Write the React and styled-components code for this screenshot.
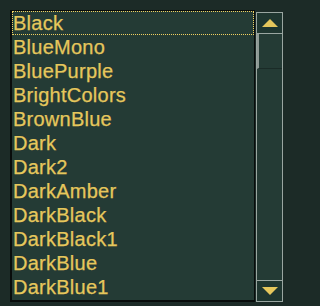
import React, { useState } from "react";
import styled, { createGlobalStyle } from "styled-components";

const GlobalStyle = createGlobalStyle`
  html, body {
    margin: 0;
    padding: 0;
    background: #1c2b27;
  }
`;

const Window = styled.div`
  width: 316px;
  height: 306px;
  box-sizing: border-box;
  padding: 10px 0 0 10px;
  background: #1c2b27;
  display: flex;
  align-items: flex-start;
  font-family: "Liberation Sans", Arial, sans-serif;
`;

const ListBox = styled.ul`
  list-style: none;
  margin: 0;
  padding: 0;
  width: 245px;
  height: 292px;
  box-sizing: border-box;
  border: 1px solid #080c0b;
  border-left-width: 2px;
  border-bottom-width: 2px;
  background: #243b35;
  overflow: hidden;
`;

const Item = styled.li`
  height: 24px;
  line-height: 22px;
  padding-left: 0;
  font-size: 20px;
  letter-spacing: 0.25px;
  -webkit-text-stroke: 0.25px #e6c75c;
  color: #e6c75c;
  white-space: nowrap;
  box-sizing: border-box;
  border: 1px dotted ${(p) => (p.$active ? "#f0d060" : "transparent")};
  cursor: pointer;
`;

const ScrollBar = styled.div`
  width: 27px;
  height: 290px;
  margin-top: 2px;
  margin-left: 1px;
  box-sizing: border-box;
  border: 1px solid #9aa6a1;
  background: #243b35;
  display: flex;
  flex-direction: column;
`;

const ArrowButton = styled.div`
  height: 20px;
  flex: none;
  display: flex;
  align-items: center;
  justify-content: center;
  background: #1f3630;
  border: 1px solid #9aa6a1;
  margin: -1px;
`;

const Track = styled.div`
  flex: 1;
  margin-top: 1px;
`;

const Thumb = styled.div`
  height: 35px;
  box-sizing: border-box;
  border-left: 2px solid #8e9a95;
  border-bottom: 1px solid #1a2b27;
  background: #243b35;
`;

const Arrow = ({ up }) => (
  <svg width="18" height="10" viewBox="0 0 18 10">
    <polygon
      points={up ? "9,1 17,9 1,9" : "1,1 17,1 9,9"}
      fill="#e6c75c"
    />
  </svg>
);

const themes = [
  "Black",
  "BlueMono",
  "BluePurple",
  "BrightColors",
  "BrownBlue",
  "Dark",
  "Dark2",
  "DarkAmber",
  "DarkBlack",
  "DarkBlack1",
  "DarkBlue",
  "DarkBlue1",
];

export default function App() {
  const [selected, setSelected] = useState(0);
  return (
    <>
      <GlobalStyle />
      <Window>
        <ListBox>
          {themes.map((t, i) => (
            <Item key={t} $active={i === selected} onClick={() => setSelected(i)}>
              {t}
            </Item>
          ))}
        </ListBox>
        <ScrollBar>
          <ArrowButton>
            <Arrow up />
          </ArrowButton>
          <Track>
            <Thumb />
          </Track>
          <ArrowButton>
            <Arrow />
          </ArrowButton>
        </ScrollBar>
      </Window>
    </>
  );
}
